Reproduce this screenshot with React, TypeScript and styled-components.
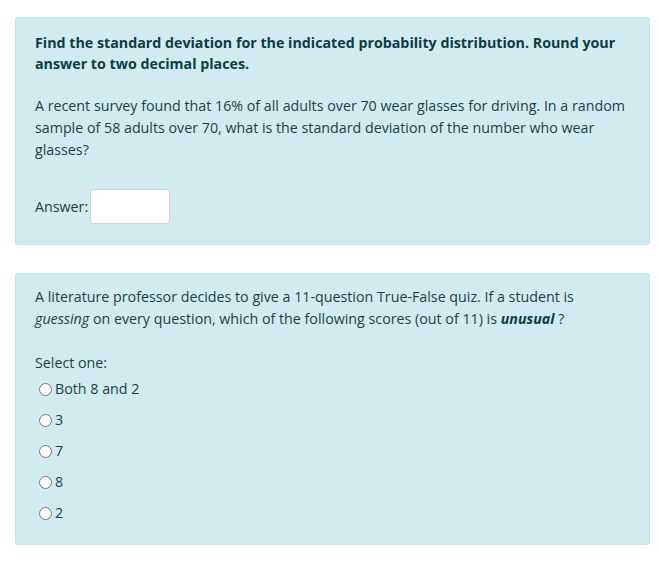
import React from "react";
import styled, { createGlobalStyle } from "styled-components";

const Global = createGlobalStyle`
  html, body { margin: 0; padding: 0; background: #ffffff; }
  body { font-family: "Open Sans", "Noto Sans", sans-serif; }
`;

const Page = styled.div`
  display: flex;
  flex-direction: column;
  gap: 28px;
  padding: 17px 9px 0 15px;
  width: 635px;
`;

const Card = styled.div<{ $pt: number }>`
  background: #d2ebf1;
  border: 1px solid #c4e3ea;
  border-radius: 3px;
  padding: ${(p) => p.$pt}px 22px 20px 19px;
  color: #1a3f46;
  font-size: 14.25px;
  line-height: 22px;
`;

const Title = styled.p`
  margin: 0 0 21px 0;
  font-weight: 700;
  line-height: 21px;
  color: #0d3c45;
`;

const Para = styled.p<{ $mb: number }>`
  margin: 0 0 ${(p) => p.$mb}px 0;
`;

const AnswerRow = styled.div`
  display: flex;
  align-items: center;
  gap: 2px;
`;

const AnswerInput = styled.input`
  width: 80px;
  height: 35px;
  box-sizing: border-box;
  border: 1px solid #ced4da;
  border-radius: 3px;
  background: #fff;
  margin: 0;
`;

const Strong = styled.em`
  font-weight: 700;
  color: #0d3c45;
`;

const Options = styled.div`
  display: flex;
  flex-direction: column;
  gap: 9px;
  margin-top: 4px;
  padding-left: 4px;
`;

const Option = styled.label`
  display: flex;
  align-items: center;
  gap: 3px;
  height: 22px;
`;

const Radio = styled.span`
  width: 11px;
  height: 11px;
  border-radius: 50%;
  border: 1px solid #6f7a7c;
  background: #fff;
  display: inline-block;
  margin-top: 1px;
`;

const options = ["Both 8 and 2", "3", "7", "8", "2"];

export default function App() {
  return (
    <>
      <Global />
      <Page>
        <Card $pt={14}>
          <Title>
            Find the standard deviation for the indicated probability distribution. Round your answer to
            two decimal places.
          </Title>
          <Para $mb={28}>
            A recent survey found that 16% of all adults over 70 wear glasses for driving. In a random
            sample of 58 adults over 70, what is the standard deviation of the number who wear glasses?
          </Para>
          <AnswerRow>
            <span>Answer:</span>
            <AnswerInput type="text" />
          </AnswerRow>
        </Card>
        <Card $pt={12}>
          <Para $mb={22}>
            A literature professor decides to give a 11-question True-False quiz. If a student is{" "}
            <em>guessing</em> on every question, which of the following scores (out of 11) is{" "}
            <Strong>unusual</Strong> ?
          </Para>
          <div>Select one:</div>
          <Options>
            {options.map((o) => (
              <Option key={o}>
                <Radio />
                {o}
              </Option>
            ))}
          </Options>
        </Card>
      </Page>
    </>
  );
}
